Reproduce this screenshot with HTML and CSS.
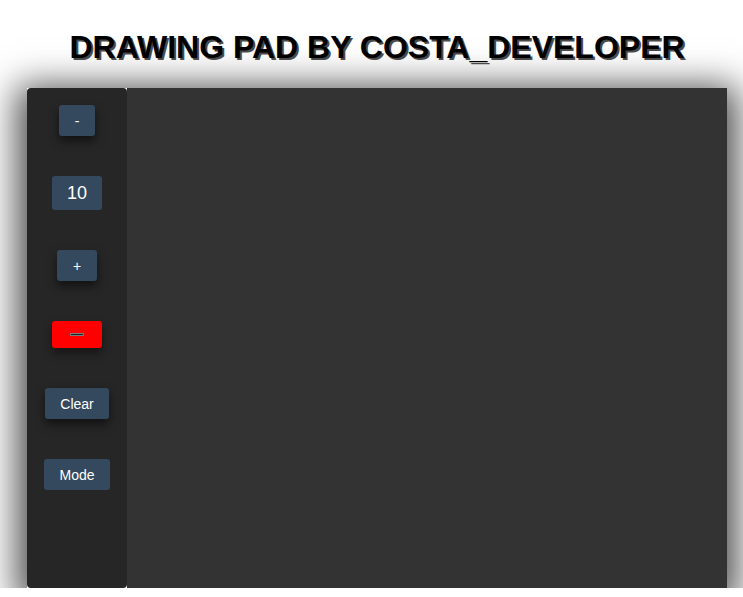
FILE: index.html
```html
<!DOCTYPE html>
<html lang="en">
<head>
<meta charset="UTF-8">
<title>Drawing Pad</title>
<link rel="stylesheet" href="styles.css">
</head>
<body>
<div class="page">
  <h1 class="title">DRAWING PAD BY COSTA_DEVELOPER</h1>
  <div class="pad">
    <aside class="toolbox">
      <button class="btn btn-shadow btn-dec">-</button>
      <span class="size">10</span>
      <button class="btn btn-shadow btn-inc">+</button>
      <div class="color"><span class="color-swatch"></span></div>
      <button class="btn btn-shadow btn-clear">Clear</button>
      <button class="btn btn-mode">Mode</button>
    </aside>
    <div class="canvas"></div>
  </div>
</div>
</body>
</html>
```

FILE: styles.css
```css
html, body {
  margin: 0;
  padding: 0;
  background: #ffffff;
  overflow: hidden;
}

.page {
  width: 700px;
  padding-left: 27px;
  font-family: "Liberation Sans", Arial, sans-serif;
}

.title {
  margin: 29px 0 23px;
  font-size: 32px;
  line-height: 36px;
  font-weight: bold;
  text-align: center;
  color: #000;
  text-shadow: 2px 2px 0 #4a4a4a;
  letter-spacing: 0;
  white-space: nowrap;
}

.pad {
  display: flex;
  width: 700px;
  height: 500px;
  box-shadow: 0 8px 34px 10px rgba(0, 0, 0, 0.7);
}

.toolbox {
  width: 100px;
  flex: 0 0 100px;
  background: #262626;
  border-radius: 4px;
  display: flex;
  flex-direction: column;
  align-items: center;
  gap: 40px;
  padding-top: 17px;
  box-sizing: border-box;
}

.canvas {
  flex: 1;
  background: #333333;
}

.btn {
  font-family: "Liberation Sans", Arial, sans-serif;
  font-size: 14px;
  color: #fff;
  background: #34495e;
  border: none;
  border-radius: 3px;
  height: 31px;
  padding: 0;
  display: flex;
  align-items: center;
  justify-content: center;
}

.btn-shadow {
  box-shadow: 0 5px 10px rgba(0, 0, 0, 0.55);
}

.btn-dec { width: 36px; }
.btn-inc { width: 40px; }
.btn-clear { width: 64px; }
.btn-mode { width: 66px; }

.size {
  width: 50px;
  height: 34px;
  background: #34495e;
  border-radius: 3px;
  color: #fff;
  font-size: 18px;
  display: flex;
  align-items: center;
  justify-content: center;
}

.color {
  width: 50px;
  height: 27px;
  background: #ff0000;
  border-radius: 3px;
  display: flex;
  align-items: center;
  justify-content: center;
  box-shadow: 0 5px 10px rgba(0, 0, 0, 0.45);
}

.color-swatch {
  width: 12px;
  height: 1px;
  border: 1px solid #7a7a7a;
  background: #222;
}
```
